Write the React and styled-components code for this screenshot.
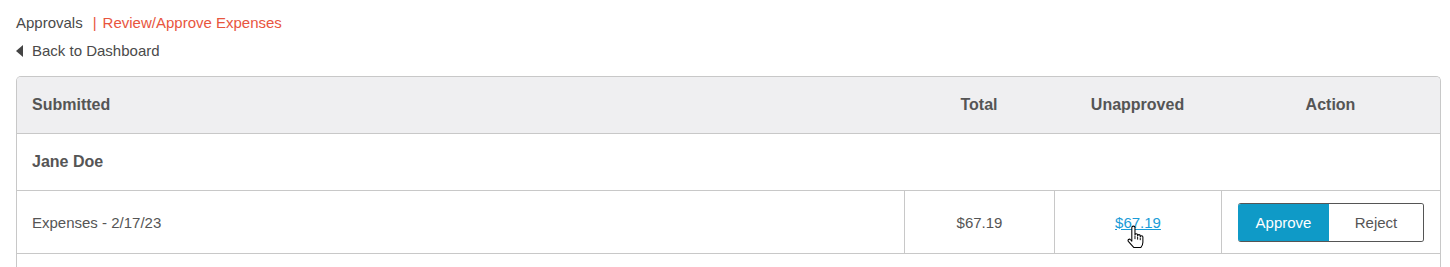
import React from "react";
import styled, { createGlobalStyle } from "styled-components";

const Global = createGlobalStyle`
  html, body { margin: 0; padding: 0; background: #fff; }
  body { font-family: "Liberation Sans", Arial, sans-serif; color: #555; }
`;

const Page = styled.div`
  padding: 13px 9px 0 16px;
`;

const Breadcrumb = styled.div`
  display: flex;
  align-items: center;
  height: 20px;
  font-size: 15px;
  line-height: 20px;
  margin-bottom: 8px;
`;

const Crumb = styled.span`
  color: ${(p) => (p.$active ? "#e8553e" : "#4a4a4a")};
`;

const Sep = styled.span`
  color: #e8553e;
  margin: 0 6px 0 10px;
`;

const BackLink = styled.a`
  display: flex;
  align-items: center;
  gap: 9px;
  height: 20px;
  font-size: 15px;
  line-height: 20px;
  color: #4a4a4a;
  text-decoration: none;
  margin-bottom: 15px;
`;

const Caret = styled.span`
  width: 0;
  height: 0;
  border-top: 6px solid transparent;
  border-bottom: 6px solid transparent;
  border-right: 7px solid #444;
`;

const Table = styled.div`
  border: 1px solid #c8c8c8;
  border-bottom: none;
  border-radius: 5px 5px 0 0;
  overflow: hidden;
`;

const Row = styled.div`
  display: grid;
  grid-template-columns: 1fr 150px 167px 219px;
  height: ${(p) => p.$h}px;
  background: ${(p) => (p.$head ? "#efeff1" : "#fff")};
  border-bottom: ${(p) => (p.$last ? "none" : "1px solid #c8c8c8")};
`;

const Cell = styled.div`
  display: flex;
  align-items: center;
  justify-content: ${(p) => (p.$center ? "center" : "flex-start")};
  padding: ${(p) => (p.$center ? "0" : "0 15px")};
  font-size: ${(p) => (p.$bold ? "16px" : "15px")};
  font-weight: ${(p) => (p.$bold ? 700 : 400)};
  color: #555;
  border-left: ${(p) => (p.$divider ? "1px solid #c8c8c8" : "none")};
  position: relative;
`;

const FullCell = styled(Cell)`
  grid-column: 1 / -1;
`;

const MoneyLink = styled.a`
  color: #1a9bd7;
  text-decoration: underline;
  font-size: 15px;
  cursor: pointer;
`;

const Cursor = styled.svg`
  position: absolute;
  left: 71px;
  top: 34px;
  width: 19px;
  height: 24px;
  pointer-events: none;
`;

const BtnGroup = styled.div`
  display: flex;
  height: 37px;
  border-radius: 3px;
  overflow: hidden;
  border: 1px solid #555;
  border-left: none;
`;

const Btn = styled.button`
  font-family: "Liberation Sans", Arial, sans-serif;
  font-size: 15px;
  border: none;
  width: ${(p) => p.$w}px;
  background: ${(p) => (p.$primary ? "#0f9ac7" : "#fff")};
  color: ${(p) => (p.$primary ? "#fff" : "#555")};
  padding: 0;
  cursor: pointer;
`;

export default function App() {
  return (
    <Page>
      <Global />
      <Breadcrumb>
        <Crumb>Approvals</Crumb>
        <Sep>|</Sep>
        <Crumb $active>Review/Approve Expenses</Crumb>
      </Breadcrumb>
      <BackLink href="#">
        <Caret />
        Back to Dashboard
      </BackLink>
      <Table>
        <Row $head $h={56}>
          <Cell $bold>Submitted</Cell>
          <Cell $bold $center>Total</Cell>
          <Cell $bold $center>Unapproved</Cell>
          <Cell $bold $center>Action</Cell>
        </Row>
        <Row $h={56}>
          <FullCell $bold>Jane Doe</FullCell>
        </Row>
        <Row $h={62}>
          <Cell>Expenses - 2/17/23</Cell>
          <Cell $center $divider>$67.19</Cell>
          <Cell $center $divider>
            <MoneyLink>$67.19</MoneyLink>
            <Cursor viewBox="0 0 18 22">
              <path
                d="M5.5 2.2a1.5 1.5 0 0 1 3 0V9.2a1.25 1.25 0 0 1 2.5 0V10a1.25 1.25 0 0 1 2.5 0V11a1.25 1.25 0 0 1 2.5 0V16q0 3 -2 5H7.5L2.2 15.2a1.3 1.3 0 0 1 2.1 -1.6L5.5 15Z"
                fill="#fff"
                stroke="#000"
                strokeWidth="1"
                strokeLinejoin="round"
              />
              <path d="M8.5 10v3M11 11v2.5M13.5 12v2" stroke="#000" strokeWidth="0.9" />
            </Cursor>
          </Cell>
          <Cell $center $divider>
            <BtnGroup>
              <Btn $primary $w={91}>Approve</Btn>
              <Btn $w={94}>Reject</Btn>
            </BtnGroup>
          </Cell>
        </Row>
        <Row $h={20} $last>
          <FullCell />
        </Row>
      </Table>
    </Page>
  );
}
